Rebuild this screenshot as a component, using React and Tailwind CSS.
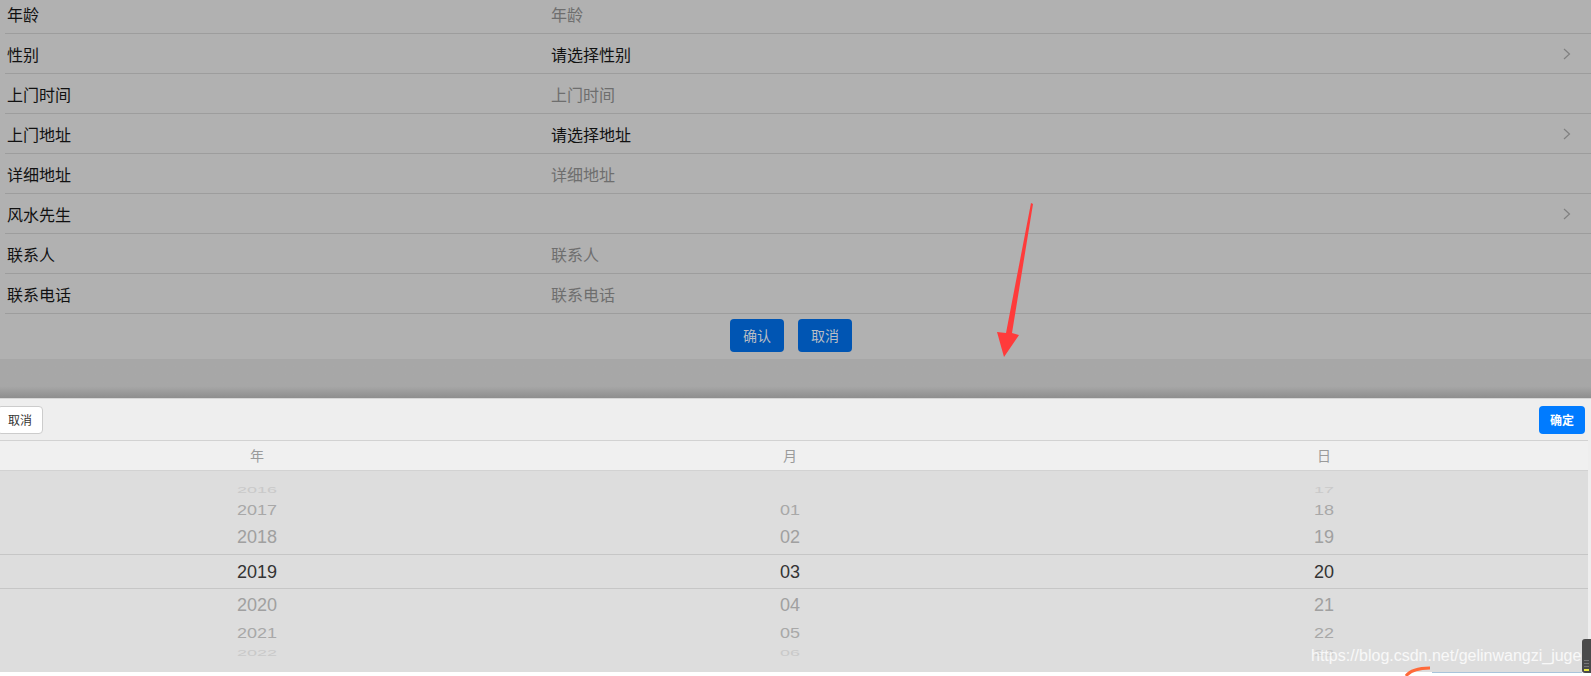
import React from 'react';

const formRows = [
    { label: '年龄', value: '年龄', placeholder: true },
    { label: '性别', value: '请选择性别', arrow: true },
    { label: '上门时间', value: '上门时间', placeholder: true },
    { label: '上门地址', value: '请选择地址', arrow: true },
    { label: '详细地址', value: '详细地址', placeholder: true },
    { label: '风水先生', value: '', arrow: true },
    { label: '联系人', value: '联系人', placeholder: true },
    { label: '联系电话', value: '联系电话', placeholder: true },
];

// wheel slots, top to bottom; index 3 is the selected one
const slots = [
    { h: 'h-[18px]', text: 'text-[#c9c9c9] scale-y-[0.5]' },
    { h: 'h-[21px]', text: 'text-[#a8a8a8] scale-y-[0.85]' },
    { h: 'h-[34px]', text: 'text-[#a0a0a0]' },
    { h: 'h-[35px] border-y border-[#c6c6c6]', text: 'text-[#333333]' },
    { h: 'h-[32px]', text: 'text-[#a0a0a0]' },
    { h: 'h-[23px]', text: 'text-[#a8a8a8] scale-y-[0.85]' },
    { h: 'h-[17px]', text: 'text-[#c9c9c9] scale-y-[0.5]' },
];

const years = ['2016', '2017', '2018', '2019', '2020', '2021', '2022'];
const months = ['', '01', '02', '03', '04', '05', '06'];
const days = ['17', '18', '19', '20', '21', '22', '23'];

const cjk = "font-['Noto_Sans_CJK_SC','Noto_Sans',sans-serif]";

const Chevron = () => (
    <svg width="8" height="12" viewBox="0 0 8 12" className="mr-[20px]">
        <polyline points="1,1 6.5,6 1,11" fill="none" stroke="#808080" strokeWidth="1.2" />
    </svg>
);

export default function App() {
    return (
        <div className={`relative w-[1591px] h-[676px] overflow-hidden bg-white ${cjk}`}>
            {/* dimmed form */}
            <div className="bg-[#b1b1b1]">
                <div className="-mt-[6px]">
                    {formRows.map((row) => (
                        <div key={row.label} className="ml-[5px] h-[40px] flex items-center border-b border-[#9d9d9d] text-[16px]">
                            <span className="w-[546px] pl-[2px] text-[#111111]">{row.label}</span>
                            <span className={`flex-1 ${row.placeholder ? 'text-[#6e6e6e]' : 'text-[#111111]'}`}>{row.value}</span>
                            {row.arrow && <Chevron />}
                        </div>
                    ))}
                </div>
                <div className="h-[45px] flex justify-center items-start pt-[5px] pr-[9px] gap-[14px]">
                    <button className="w-[54px] h-[33px] rounded-[4px] bg-[#0055b3] text-[14px] text-[#b9bdc4]">确认</button>
                    <button className="w-[54px] h-[33px] rounded-[4px] bg-[#0055b3] text-[14px] text-[#b9bdc4]">取消</button>
                </div>
            </div>
            <div className="h-[39px] bg-gradient-to-b from-[#a7a7a7] from-70% to-[#8e8e8e]" />

            {/* date picker */}
            <div className="bg-[#eeeeee]">
                <div className="h-[42px] flex items-center justify-between border-t border-[#d6d6d6] pr-[6px]">
                    <button className="-ml-[3px] w-[46px] h-[28px] rounded-[4px] bg-white border border-[#cccccc] text-[12px] text-[#333333]">取消</button>
                    <button className="w-[46px] h-[28px] rounded-[4px] bg-[#007bff] text-[12px] font-bold text-white">确定</button>
                </div>
                <div className="w-[1588px]">
                    <div className="h-[31px] grid grid-cols-[514px_552px_1fr] items-center bg-[#f0f0f0] border-y border-[#d2d2d2] text-[14px] text-[#9a9a9a]">
                        <span className="text-center">年</span>
                        <span className="text-center">月</span>
                        <span className="text-center pr-[6px]">日</span>
                    </div>
                    <div className="h-[201px] bg-[#dddddd] pt-[10px] font-['Liberation_Sans',Arial,sans-serif] text-[18px]">
                        {slots.map((slot, i) => (
                            <div key={i} className={`grid grid-cols-[514px_552px_1fr] items-center ${slot.h}`}>
                                <span className={`text-center leading-none ${slot.text}`}>{years[i]}</span>
                                <span className={`text-center leading-none ${slot.text}`}>{months[i]}</span>
                                <span className={`text-center leading-none pr-[6px] ${slot.text}`}>{days[i]}</span>
                            </div>
                        ))}
                    </div>
                </div>
            </div>

            {/* annotation arrow */}
            <svg className="absolute left-0 top-0 pointer-events-none" width="1591" height="676">
                <polygon points="1031,203 1033,204 1012,333 1019,335 1004,357 997,332 1006,333" fill="#ff3b3b" />
                <path d="M1406 676 Q1412 668 1430 668" fill="none" stroke="#ff6a3a" strokeWidth="3" />
                <line x1="1432" y1="672.5" x2="1582" y2="672.5" stroke="#a9c3da" strokeWidth="1" />
            </svg>

            {/* watermark */}
            <span className="absolute left-[1311px] top-[648px] text-[16px] leading-none text-white/80 font-['Liberation_Sans',Arial,sans-serif] whitespace-nowrap">
                https://blog.csdn.net/gelinwangzi_juge
            </span>
            <div className="absolute left-[1582px] top-[639px] w-[9px] h-[34px] rounded-l-[3px] bg-[#4a4a4a] flex flex-col justify-end items-center pb-[2px] gap-[2px]">
                <div className="w-[5px] h-[1px] bg-[#777777]" />
                <div className="w-[5px] h-[1px] bg-[#777777]" />
                <div className="w-[5px] h-[1px] bg-[#777777]" />
                <div className="w-[5px] h-[2px] bg-[#e8e840]" />
            </div>
        </div>
    );
}
